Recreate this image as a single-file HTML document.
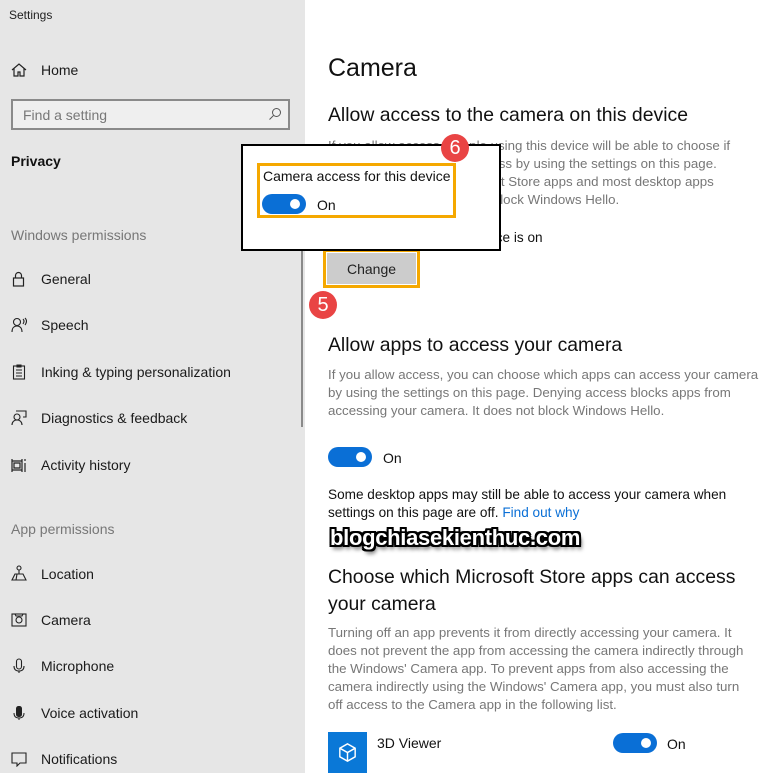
<!DOCTYPE html>
<html><head><meta charset="utf-8"><style>
*{margin:0;padding:0;box-sizing:border-box}
body{width:768px;height:773px;overflow:hidden;background:#fff;font-family:"Liberation Sans",sans-serif;position:relative;color:#000}
.a{position:absolute;white-space:nowrap}
#side{position:absolute;left:0;top:0;width:305px;height:773px;background:#e6e6e6}
.nav{font-size:14px;color:#1a1a1a}
.ic{position:absolute;left:11px;width:16px;height:16px}
.g{font-size:14px;color:#777}
.t{font-size:13.3px;color:#777}
.b{font-size:13.6px;color:#111}
.h{font-size:19.4px;color:#111}
.tog{position:absolute;width:44px;height:20px;border-radius:10px;background:#0a6fd6}
.tog::after{content:"";position:absolute;right:6px;top:5px;width:10px;height:10px;border-radius:50%;background:#fff}
.badge{position:absolute;width:28px;height:28px;border-radius:50%;background:#e94444;color:#fff;font-size:20px;text-align:center;line-height:28px}
</style></head><body>
<div id="side"></div>
<div class="a" style="left:9px;top:8px;font-size:12px;color:#222">Settings</div>
<svg class="ic" style="top:62px" viewBox="0 0 16 16" fill="none" stroke="#222" stroke-width="1.2"><path d="M1 8L8 2l7 6M3 6.5V14h4v-4h2v4h4V6.5"/></svg>
<div class="a nav" style="left:41px;top:62px">Home</div>
<div class="a" style="left:11px;top:99px;width:279px;height:31px;border:2px solid #8a8a8a;background:#efefef"></div>
<div class="a" style="left:23px;top:107px;font-size:14px;color:#777">Find a setting</div>
<svg class="a" style="left:268px;top:107px" width="14" height="14" viewBox="0 0 14 14" fill="none" stroke="#555" stroke-width="1"><circle cx="8.5" cy="5.5" r="4"/><path d="M5.5 8.5L1.5 12.5"/></svg>
<div class="a" style="left:11px;top:153px;font-size:14px;font-weight:bold;color:#111">Privacy</div>
<div class="a g" style="left:11px;top:227px">Windows permissions</div>
<svg class="ic" style="top:271px" viewBox="0 0 16 16" fill="none" stroke="#222" stroke-width="1.2"><rect x="2.5" y="7" width="10" height="8"/><path d="M4.5 7V4.5a3 3 0 016 0V7"/></svg>
<div class="a nav" style="left:41px;top:271px">General</div>
<svg class="ic" style="top:317px" viewBox="0 0 16 16" fill="none" stroke="#222" stroke-width="1.1"><circle cx="6" cy="5" r="3.5"/><path d="M1 15c0-4 2-6 5-6s5 2 5 6M12 2q2 2 0 5M14 1q3 3 0 7"/></svg>
<div class="a nav" style="left:41px;top:317px">Speech</div>
<svg class="ic" style="top:364px" viewBox="0 0 16 16" fill="none" stroke="#222" stroke-width="1.1"><rect x="2.5" y="2" width="11" height="13"/><path d="M6 1h4v2H6zM5 6h6M5 9h6M5 12h6"/></svg>
<div class="a nav" style="left:41px;top:364px">Inking &amp; typing personalization</div>
<svg class="ic" style="top:410px" viewBox="0 0 16 16" fill="none" stroke="#222" stroke-width="1.1"><circle cx="6" cy="7" r="3"/><path d="M1 15c0-3 2-5 5-5s5 2 5 5M5 1h10v6h-3"/></svg>
<div class="a nav" style="left:41px;top:410px">Diagnostics &amp; feedback</div>
<svg class="ic" style="top:457px" viewBox="0 0 16 16" fill="none" stroke="#222" stroke-width="1.2"><path d="M1 2v13M11 2v13M1 4h10M1 13h10M3 6h6v5H3zM14 2v2M14 6v9"/></svg>
<div class="a nav" style="left:41px;top:457px">Activity history</div>
<div class="a g" style="left:11px;top:521px">App permissions</div>
<svg class="ic" style="top:565px" viewBox="0 0 16 16" fill="none" stroke="#222" stroke-width="1.1"><circle cx="8" cy="3" r="2"/><path d="M8 5v4M1 15h14L12 9H4zM6 9l-1 6"/></svg>
<div class="a nav" style="left:41px;top:566px">Location</div>
<svg class="ic" style="top:612px" viewBox="0 0 16 16" fill="none" stroke="#222" stroke-width="1.1"><rect x="1" y="2" width="14" height="12"/><circle cx="8" cy="8" r="3"/><path d="M4 2l1 2h6l1-2"/></svg>
<div class="a nav" style="left:41px;top:612px">Camera</div>
<svg class="ic" style="top:658px" viewBox="0 0 16 16" fill="none" stroke="#222" stroke-width="1.1"><rect x="5.5" y="1" width="5" height="10" rx="2.5"/><path d="M3 8q0 5 5 5t5-5M8 13v2"/></svg>
<div class="a nav" style="left:41px;top:658px">Microphone</div>
<svg class="ic" style="top:705px" viewBox="0 0 16 16"><rect x="5" y="1" width="6" height="11" rx="2.5" fill="#222"/><path d="M3 8q0 5 5 5t5-5M8 13v2" stroke="#222" fill="none"/></svg>
<div class="a nav" style="left:41px;top:705px">Voice activation</div>
<svg class="ic" style="top:751px" viewBox="0 0 16 16" fill="none" stroke="#222" stroke-width="1.1"><path d="M1 2h14v10H9l-3 3v-3H1z"/></svg>
<div class="a nav" style="left:41px;top:751px">Notifications</div>
<div class="a" style="left:301px;top:250px;width:2px;height:177px;background:#8a8a8a"></div>

<div class="a" style="left:328px;top:54px;font-size:25px;color:#111">Camera</div>
<div class="a h" style="left:328px;top:104px">Allow access to the camera on this device</div>
<div class="a t" style="left:328px;top:138px">If you allow access, people using this device will be able to choose if</div>
<div class="a t" style="left:328px;top:156px">their apps have camera access by using the settings on this page.</div>
<div class="a t" style="left:328px;top:174px">Allowing access lets Microsoft Store apps and most desktop apps</div>
<div class="a t" style="left:328px;top:192px">use the camera. It does not block Windows Hello.</div>
<div class="a b" style="left:328px;top:230px">Camera access for this device is on</div>
<div class="a" style="left:323px;top:249px;width:97px;height:39px;border:3px solid #f5a800;background:#fff"></div>
<div class="a" style="left:327px;top:253px;width:89px;height:31px;background:#ccc;font-size:14px;color:#222;text-align:center;line-height:32px">Change</div>
<div class="badge" style="left:309px;top:291px">5</div>

<div class="a" style="left:241px;top:144px;width:260px;height:107px;border:2px solid #000;background:#fff"></div>
<div class="a" style="left:257px;top:163px;width:199px;height:55px;border:3px solid #f5a800"></div>
<div class="a" style="left:263px;top:168px;font-size:14px;color:#111">Camera access for this device</div>
<div class="tog" style="left:262px;top:194px"></div>
<div class="a" style="left:317px;top:197px;font-size:14px;color:#111">On</div>
<div class="badge" style="left:441px;top:134px">6</div>

<div class="a h" style="left:328px;top:334px">Allow apps to access your camera</div>
<div class="a t" style="left:328px;top:367px">If you allow access, you can choose which apps can access your camera</div>
<div class="a t" style="left:328px;top:385px">by using the settings on this page. Denying access blocks apps from</div>
<div class="a t" style="left:328px;top:403px">accessing your camera. It does not block Windows Hello.</div>
<div class="tog" style="left:328px;top:447px"></div>
<div class="a" style="left:383px;top:450px;font-size:14px;color:#111">On</div>
<div class="a b" style="left:328px;top:487px">Some desktop apps may still be able to access your camera when</div>
<div class="a b" style="left:328px;top:505px">settings on this page are off. <span style="color:#0a6fd6">Find out why</span></div>
<div class="a" style="left:330px;top:525px;font-size:22px;font-weight:bold;color:#fff;letter-spacing:-0.3px;text-shadow:-2px -2px 0 #000,2px -2px 0 #000,-2px 2px 0 #000,2px 2px 0 #000,0 2px 0 #000,0 -2px 0 #000,2px 0 0 #000,-2px 0 0 #000,2px 4px 4px #444">blogchiasekienthuc.com</div>
<div class="a h" style="left:328px;top:566px">Choose which Microsoft Store apps can access</div>
<div class="a h" style="left:328px;top:593px">your camera</div>
<div class="a t" style="left:328px;top:625px">Turning off an app prevents it from directly accessing your camera. It</div>
<div class="a t" style="left:328px;top:643px">does not prevent the app from accessing the camera indirectly through</div>
<div class="a t" style="left:328px;top:661px">the Windows' Camera app. To prevent apps from also accessing the</div>
<div class="a t" style="left:328px;top:679px">camera indirectly using the Windows' Camera app, you must also turn</div>
<div class="a t" style="left:328px;top:697px">off access to the Camera app in the following list.</div>
<div class="a" style="left:328px;top:732px;width:39px;height:41px;background:#0a78d7"></div>
<svg class="a" style="left:336px;top:741px" width="23" height="23" viewBox="0 0 24 24" fill="none" stroke="#fff" stroke-width="1.5"><path d="M12 3l8 4.5v9L12 21l-8-4.5v-9zM4 7.5l8 4.5 8-4.5M12 12v9"/></svg>
<div class="a" style="left:377px;top:735px;font-size:14px;color:#111">3D Viewer</div>
<div class="tog" style="left:613px;top:733px"></div>
<div class="a" style="left:667px;top:736px;font-size:14px;color:#111">On</div>
</body></html>
